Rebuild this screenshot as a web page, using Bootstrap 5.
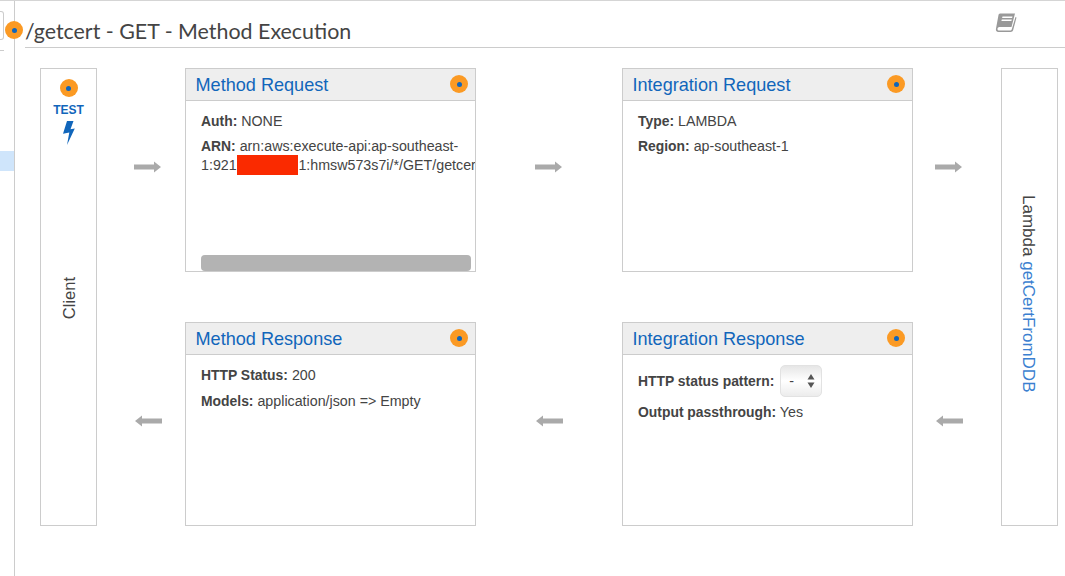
<!DOCTYPE html>
<html lang="en">
<head>
  <meta charset="UTF-8">
  <title>Method Execution</title>
  <link href="https://cdn.jsdelivr.net/npm/bootstrap@5.3.2/dist/css/bootstrap.min.css" rel="stylesheet">
  <style>
    body {
      background: #fff;
      font-family: "Liberation Sans", Arial, sans-serif;
      font-size: 14.25px;
      color: #444;
      height: 576px;
      overflow: hidden;
      border-top: 1px solid #d5d5d5;
    }
    a { color: #1166bb; text-decoration: none; }
    b { font-size: 13.9px; }
    .shell { height: 575px; }
    .side {
      width: 15px;
      border-right: 1px solid #ccc;
      position: relative;
      flex: none;
    }
    .side-btn {
      height: 29px;
      width: 4px;
      margin-top: 10px;
      border: 1px solid #ccc;
      border-left: 0;
      border-radius: 0 3px 3px 0;
    }
    .side-line { height: 1px; width: 4px; background: #ccc; margin-top: 10px; }
    .side-active { height: 20px; background: #cfe5fb; margin-top: 100px; }
    .title-row {
      margin-left: 10px;
      height: 47px;
      border-bottom: 1px solid #ccc;
      padding-top: 15px;
    }
    .title-row h1 {
      font-family: Lato, sans-serif;
      font-size: 21.4px;
      line-height: 30px;
      font-weight: 400;
      color: #444;
      margin: 0;
    }
    .book { margin: -3px 48px 0 0; }
    .diagram {
      display: grid;
      grid-template-columns: 57px 88px 291px 146px 291px 88px 57px;
      grid-template-rows: 204px 50px 204px;
      margin: 20px 0 0 25px;
    }
    .box { border: 1px solid #ccc; background: #fff; }
    .tall { grid-row: 1 / 4; }
    .panel { position: relative; overflow: hidden; display: flex; flex-direction: column; }
    .panel-head {
      height: 32px;
      flex: none;
      background: #eee;
      border-bottom: 1px solid #ccc;
      padding: 1px 9px 0 9.5px;
      font-size: 18.1px;
      line-height: 31px;
    }
    .panel-body-x { padding: 11px 15px 0; flex: 1; }
    .panel-body-x p { margin: 0 0 7px; line-height: 19px; white-space: nowrap; }
    .panel-body-x.top-row p:first-child { margin-bottom: 6px; }
    .dot {
      width: 18px;
      height: 18px;
      border-radius: 50%;
      background: #fb9a24;
      display: flex;
      align-items: center;
      justify-content: center;
      flex: none;
    }
    .dot::after {
      content: "";
      width: 5px;
      height: 5px;
      border-radius: 50%;
      background: #1166bb;
    }
    .panel .dot { position: absolute; top: 6px; right: 7px; }
    .title-dot { position: absolute; left: 5px; top: 20px; }
    .test-label { font-size: 12px; font-weight: 700; color: #1166bb; line-height: 14px; margin-top: 6px; }
    .vtext { writing-mode: vertical-rl; font-size: 17px; white-space: nowrap; color: #444; }
    .vtext-client { transform: rotate(180deg); font-size: 16.5px; }
    .vtext a { color: #3b7fd0; }
    .arrow-cell { display: flex; align-items: center; padding-bottom: 6px; }
    .redact {
      display: inline-block;
      width: 61px;
      height: 20px;
      background: #fa2a00;
      margin-left: -4px;
      vertical-align: -5px;
      margin-top: -3px;
    }
    .scroll-track { height: 16px; background: #f4f4f4; margin: 0 4px 0 15px; border-radius: 4px; flex: none; }
    .scroll-thumb { height: 100%; background: #b3b3b3; border-radius: 4px; }
    .fake-select {
      width: 42px;
      height: 32px;
      border-radius: 5px;
      border: 1px solid #e2e2e2;
      background: linear-gradient(#e6e6e6, #fff 50%, #ececec);
      padding: 0 6px 0 8px;
      margin-left: 6px;
      font-weight: 400;
    }
    .status-row { margin: 0 0 6px !important; }
  </style>
</head>
<body>
  <div class="shell d-flex">
    <div class="side">
      <div class="side-btn"></div>
      <div class="side-line"></div>
      <div class="side-active"></div>
      <div class="dot title-dot"></div>
    </div>
    <div class="flex-grow-1">
      <div class="title-row d-flex justify-content-between">
        <h1>/getcert - GET - Method Execution</h1>
        <svg class="book" width="22" height="20" viewBox="0 0 22 20">
          <path d="M5.500 .5H20L16.500 14H4.500C3 14 2.500 15 2.500 16S3.100 17.500 4.500 17.500H15C16 17.500 16.500 17.100 16.800 16.200L20.500 4L21.500 4.500L18.200 17C17.900 18.300 16.900 19 15.500 19H3.500C1.500 19 .5 17.500 1 15.500L3.500 2C3.700 1 4.500 .5 5.500 .5Z" fill="#999"/>
          <path d="M7.500 3.500H17.500L17.100 5H7.100ZM6.800 6.500H16.800L16.400 8H6.400Z" fill="#fff"/>
        </svg>
      </div>
      <div class="diagram">
        <div class="box tall d-flex flex-column align-items-center" style="padding-top:10px">
          <div class="dot"></div>
          <div class="test-label">TEST</div>
          <svg class="mt-1" width="13" height="24" viewBox="0 0 13 24"><path d="M5 0H11.500L8.500 8.200L12.800 7.500L5 24L7.300 11.500L1 12.700Z" fill="#1166bb"/></svg>
          <div class="flex-grow-1 d-flex align-items-end" style="padding-bottom:206px;padding-left:2px">
            <span class="vtext vtext-client">Client</span>
          </div>
        </div>

        <div class="arrow-cell" style="padding-left:37px">
          <svg width="27" height="12" viewBox="0 0 27 12"><path d="M0 3.500H20V.5L27 6L20 11.500V8.500H0Z" fill="#aaa"/></svg>
        </div>

        <div class="box panel">
          <div class="panel-head"><a href="#">Method Request</a></div>
          <span class="dot"></span>
          <div class="panel-body-x top-row">
            <p><b>Auth:</b> NONE</p>
            <p><b>ARN:</b> arn:aws:execute-api:ap-southeast-<br>1:921-<span class="redact"></span>1:hmsw573s7i/*/GET/getcert</p>
          </div>
          <div class="scroll-track"><div class="scroll-thumb"></div></div>
        </div>

        <div class="arrow-cell justify-content-center" style="padding-right:1px">
          <svg width="27" height="12" viewBox="0 0 27 12"><path d="M0 3.500H20V.5L27 6L20 11.500V8.500H0Z" fill="#aaa"/></svg>
        </div>

        <div class="box panel">
          <div class="panel-head"><a href="#">Integration Request</a></div>
          <span class="dot"></span>
          <div class="panel-body-x top-row">
            <p><b>Type:</b> LAMBDA</p>
            <p><b>Region:</b> ap-southeast-1</p>
          </div>
        </div>

        <div class="arrow-cell" style="padding-left:22px">
          <svg width="27" height="12" viewBox="0 0 27 12"><path d="M0 3.500H20V.5L27 6L20 11.500V8.500H0Z" fill="#aaa"/></svg>
        </div>

        <div class="box tall d-flex justify-content-center" style="padding:126px 3px 0 0">
          <span class="vtext">Lambda <a href="#">getCertFromDDB</a></span>
        </div>

        <div class="arrow-cell" style="grid-column:2;grid-row:3;padding-left:38px">
          <svg width="27" height="12" viewBox="0 0 27 12"><path d="M27 3.500H7V.5L0 6L7 11.500V8.500H27Z" fill="#aaa"/></svg>
        </div>

        <div class="box panel" style="grid-column:3;grid-row:3">
          <div class="panel-head"><a href="#">Method Response</a></div>
          <span class="dot"></span>
          <div class="panel-body-x">
            <p><b>HTTP Status:</b> 200</p>
            <p><b>Models:</b> application/json =&gt; Empty</p>
          </div>
        </div>

        <div class="arrow-cell justify-content-center" style="grid-column:4;grid-row:3">
          <svg width="27" height="12" viewBox="0 0 27 12"><path d="M27 3.500H7V.5L0 6L7 11.500V8.500H27Z" fill="#aaa"/></svg>
        </div>

        <div class="box panel" style="grid-column:5;grid-row:3">
          <div class="panel-head"><a href="#">Integration Response</a></div>
          <span class="dot"></span>
          <div class="panel-body-x" style="padding-top:10px">
            <p class="d-flex align-items-center status-row"><b>HTTP status pattern:</b>
              <span class="fake-select d-inline-flex align-items-center justify-content-between">-
                <svg width="8" height="14" viewBox="0 0 8 14"><path d="M4 0L7.500 5.500H.5ZM4 14L.5 8.500H7.500Z" fill="#555"/></svg>
              </span>
            </p>
            <p><b>Output passthrough:</b> Yes</p>
          </div>
        </div>

        <div class="arrow-cell" style="grid-column:6;grid-row:3;padding-left:23px">
          <svg width="27" height="12" viewBox="0 0 27 12"><path d="M27 3.500H7V.5L0 6L7 11.500V8.500H27Z" fill="#aaa"/></svg>
        </div>
      </div>
    </div>
  </div>
  <script src="https://cdn.jsdelivr.net/npm/bootstrap@5.3.2/dist/js/bootstrap.bundle.min.js"></script>
</body>
</html>
